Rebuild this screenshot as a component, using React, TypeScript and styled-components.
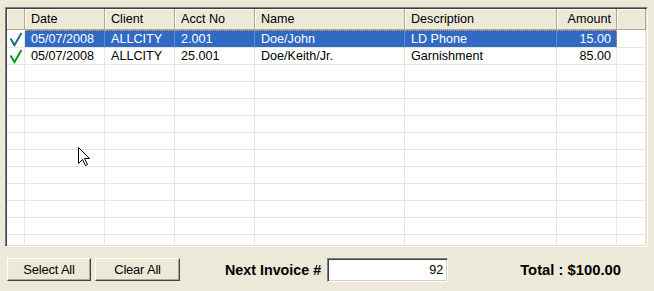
import React from "react";
import styled, { createGlobalStyle } from "styled-components";

const GlobalStyle = createGlobalStyle`
  html, body { margin: 0; padding: 0; background: #ece9d8; }
  body { font-family: "Liberation Sans", Arial, sans-serif; }
`;

const GRID = "#ebe7d8";
const SEL = "#316ac5";

const Window = styled.div`
  position: relative;
  width: 654px;
  height: 291px;
  background: #ece9d8;
  display: flex;
  flex-direction: column;
  overflow: hidden;
`;

const GridFrame = styled.div`
  margin: 7px 6px 0 5px;
  height: 240px;
  box-sizing: border-box;
  border: 1px solid;
  border-color: #808080 #ffffff #ffffff #808080;
  box-shadow: inset 1px 1px 0 #404040, inset -1px -1px 0 #e4e0d0;
  padding: 1px;
  display: flex;
`;

const GridInner = styled.div`
  flex: 1;
  background: #ffffff;
  overflow: hidden;
  display: flex;
  flex-direction: column;
`;

const HeaderRow = styled.div`
  display: flex;
  height: 21px;
  flex: none;
`;

const HeaderCell = styled.div<{ $w?: number; $right?: boolean }>`
  box-sizing: border-box;
  ${(p) => (p.$w ? `width: ${p.$w}px; flex: none;` : "flex: 1;")}
  background: #ece9d8;
  border-right: 1px solid #aca899;
  border-bottom: 1px solid #aca899;
  box-shadow: inset 1px 1px 0 #ffffff;
  font-size: 12.6px;
  color: #000;
  display: flex;
  align-items: center;
  justify-content: ${(p) => (p.$right ? "flex-end" : "flex-start")};
  padding: 0 5px 0 6px;
  white-space: nowrap;
`;

const BodyRow = styled.div<{ $sel?: boolean }>`
  display: flex;
  height: ${(p) => (p.$sel ? 18 : 17)}px;
  flex: none;
`;

const Cell = styled.div<{ $w?: number; $right?: boolean; $sel?: boolean; $last?: boolean }>`
  box-sizing: border-box;
  ${(p) => (p.$w ? `width: ${p.$w}px; flex: none;` : "flex: 1;")}
  border-bottom: 1px solid ${GRID};
  border-right: 1px ${(p) => (p.$sel && p.$last ? "dotted #e8a040" : `solid ${p.$sel ? "#5f8bd3" : GRID}`)};
  ${(p) => (p.$sel ? `border-top: 1px dotted #e8a040; background: ${SEL}; color: #fff;` : "color: #000;")}
  font-size: 12.6px;
  display: flex;
  align-items: center;
  justify-content: ${(p) => (p.$right ? "flex-end" : "flex-start")};
  padding: 0 5px 0 6px;
  white-space: nowrap;
  overflow: hidden;
`;

const MarkCell = styled.div<{ $sel?: boolean }>`
  box-sizing: border-box;
  width: 18px;
  flex: none;
  border-bottom: 1px solid ${GRID};
  border-right: 1px solid ${GRID};
  ${(p) => (p.$sel ? "border-top: 1px solid #fff;" : "")}
  display: flex;
  align-items: center;
  padding-left: 2px;
`;

const FillerCell = styled.div`
  flex: 1;
  box-sizing: border-box;
  border-bottom: 1px solid ${GRID};
  border-right: 1px solid ${GRID};
`;

const Footer = styled.div`
  flex: 1;
  display: flex;
  align-items: center;
  padding-left: 7px;
  padding-top: 1px;
`;

const Button = styled.button<{ $w: number }>`
  width: ${(p) => p.$w}px;
  height: 23px;
  margin-right: 4px;
  box-sizing: border-box;
  background: #ece9d8;
  border: 1px solid;
  border-color: #ffffff #404040 #404040 #ffffff;
  box-shadow: inset -1px -1px 0 #aca899;
  font-family: "Liberation Sans", Arial, sans-serif;
  font-size: 13px;
  color: #000;
  padding: 0;
  letter-spacing: -0.2px;
`;

const Label = styled.span<{ $ml: number; $size: number }>`
  margin-left: ${(p) => p.$ml}px;
  font-size: ${(p) => p.$size}px;
  font-weight: bold;
  color: #000;
  white-space: nowrap;
`;

const InputBox = styled.div`
  margin-left: 6px;
  width: 121px;
  height: 24px;
  box-sizing: border-box;
  border: 1px solid;
  border-color: #808080 #ffffff #ffffff #808080;
  box-shadow: inset 1px 1px 0 #404040, inset -1px -1px 0 #d4d0c8;
  background: #fff;
  display: flex;
  align-items: center;
  justify-content: flex-end;
  padding-right: 4px;
  font-size: 12.6px;
  color: #000;
`;

const Cursor = styled.svg`
  position: absolute;
  left: 78px;
  top: 147px;
`;

const widths = [80, 70, 80, 150, 152, 60];
const headers = ["Date", "Client", "Acct No", "Name", "Description", "Amount"];

const rows = [
  ["05/07/2008", "ALLCITY", "2.001", "Doe/John", "LD Phone", "15.00"],
  ["05/07/2008", "ALLCITY", "25.001", "Doe/Keith/Jr.", "Garnishment", "85.00"],
];

const Check = ({ color }: { color: string }) => (
  <svg width="14" height="15" viewBox="0 0 14 15">
    <path d="M1.5 6.5 L5.5 13 L12.5 1" fill="none" stroke={color} strokeWidth="2" strokeLinejoin="miter" />
    <path d="M4.5 12 L5.8 13.5" stroke={color} strokeWidth="1.5" />
  </svg>
);

export default function App() {
  return (
    <Window>
      <GlobalStyle />
      <GridFrame>
        <GridInner>
          <HeaderRow>
            <HeaderCell $w={18} />
            {headers.map((h, i) => (
              <HeaderCell key={h} $w={widths[i]} $right={i === 5}>
                {h}
              </HeaderCell>
            ))}
            <HeaderCell />
          </HeaderRow>
          {rows.map((r, ri) => {
            const sel = ri === 0;
            return (
              <BodyRow key={ri} $sel={sel}>
                <MarkCell $sel={sel}>
                  <Check color={sel ? "#16708a" : "#0a9a1a"} />
                </MarkCell>
                {r.map((v, i) => (
                  <Cell key={i} $w={widths[i]} $right={i === 5} $sel={sel} $last={i === 5}>
                    {v}
                  </Cell>
                ))}
                <FillerCell />
              </BodyRow>
            );
          })}
          {Array.from({ length: 12 }).map((_, ri) => (
            <BodyRow key={`e${ri}`}>
              <MarkCell />
              {widths.map((w, i) => (
                <Cell key={i} $w={w} />
              ))}
              <FillerCell />
            </BodyRow>
          ))}
        </GridInner>
      </GridFrame>
      <Footer>
        <Button $w={84}>Select All</Button>
        <Button $w={85}>Clear All</Button>
        <Label $ml={41} $size={14.3}>Next Invoice #</Label>
        <InputBox>92</InputBox>
        <Label $ml={72} $size={14.8}>Total : $100.00</Label>
      </Footer>
      <Cursor width="13" height="20" viewBox="0 0 13 20">
        <path
          d="M0.5 0.5 V16.5 L4.5 12.5 L7.5 18.5 L9.5 17.5 L6.5 11.5 H11.5 Z"
          fill="#fff"
          stroke="#000"
          strokeWidth="1"
          strokeLinejoin="miter"
        />
      </Cursor>
    </Window>
  );
}
